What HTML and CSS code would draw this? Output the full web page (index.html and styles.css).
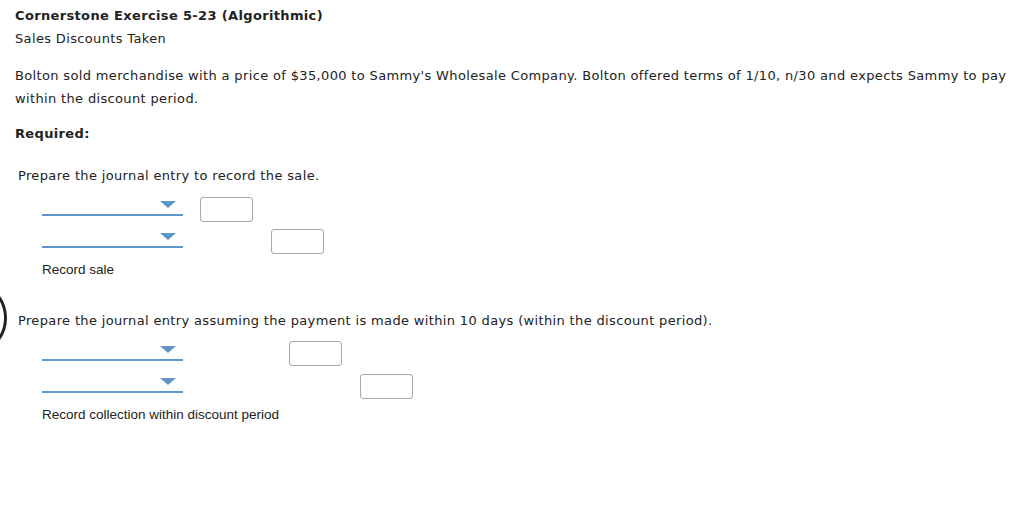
FILE: index.html
```html
<!DOCTYPE html>
<html>
<head>
<meta charset="utf-8">
<link rel="stylesheet" href="styles.css">
</head>
<body>
<div class="page">
  <h1 class="title">Cornerstone Exercise 5-23 (Algorithmic)</h1>
  <p class="subtitle">Sales Discounts Taken</p>
  <p class="intro">Bolton sold merchandise with a price of $35,000 to Sammy's Wholesale Company. Bolton offered terms of 1/10, n/30 and expects Sammy to pay within the discount period.</p>
  <p class="required">Required:</p>

  <section class="part">
    <p class="prompt">Prepare the journal entry to record the sale.</p>
    <div class="entry entry-a">
      <div class="row">
        <div class="select"><span class="caret"></span></div>
        <div class="amount debit"></div>
      </div>
      <div class="row">
        <div class="select"><span class="caret"></span></div>
        <div class="amount credit"></div>
      </div>
      <p class="memo">Record sale</p>
    </div>
  </section>

  <section class="part part-b">
    <span class="marker"></span>
    <p class="prompt">Prepare the journal entry assuming the payment is made within 10 days (within the discount period).</p>
    <div class="entry entry-b">
      <div class="row">
        <div class="select"><span class="caret"></span></div>
        <div class="amount debit"></div>
      </div>
      <div class="row">
        <div class="select"><span class="caret"></span></div>
        <div class="amount credit"></div>
      </div>
      <p class="memo">Record collection within discount period</p>
    </div>
  </section>
</div>
</body>
</html>
```

FILE: styles.css
```css
html, body {
  margin: 0;
  padding: 0;
  background: #ffffff;
}

.page {
  font-family: "DejaVu Sans", Verdana, sans-serif;
  font-size: 13px;
  letter-spacing: 0.35px;
  color: #222222;
  padding: 6px 15px 0 15px;
}

.title {
  margin: 0;
  font-size: 13px;
  font-weight: bold;
  line-height: 20px;
}

.subtitle {
  margin: 3px 0 0 0;
  line-height: 20px;
}

.intro {
  margin: 15px 0 0 0;
  line-height: 23px;
  max-width: 1000px;
}

.required {
  margin: 14px 0 0 0;
  font-weight: bold;
  line-height: 20px;
}

.part {
  position: relative;
  padding-left: 3px;
}

.prompt {
  margin: 22px 0 0 0;
  line-height: 20px;
}

.part-b .prompt {
  margin-top: 31px;
}

.entry {
  padding-left: 24px;
  margin-top: 10px;
}

.row {
  display: flex;
  align-items: flex-start;
  height: 32px;
}

.select {
  position: relative;
  width: 141px;
  height: 18px;
  border-bottom: 2px solid #5f96cc;
}

.caret {
  position: absolute;
  right: 7px;
  top: 5px;
  width: 0;
  height: 0;
  border-left: 8px solid transparent;
  border-right: 8px solid transparent;
  border-top: 7px solid #5f96cc;
}

.amount {
  width: 51px;
  height: 23px;
  border: 1px solid #a9a9a9;
  border-radius: 3px;
  box-shadow: inset 0 0 1px rgba(0,0,0,0.15);
  background: #ffffff;
  margin-top: 1px;
}

.entry-a .debit { margin-left: 17px; }
.entry-a .credit { margin-left: 88px; }
.entry-b .debit { margin-left: 106px; margin-top: 0; }
.entry-b .credit { margin-left: 177px; }

.memo {
  margin: 0;
  font-family: "Liberation Sans", Arial, sans-serif;
  font-size: 13.5px;
  letter-spacing: 0;
  line-height: 20px;
  color: #222222;
}

.marker {
  position: absolute;
  left: -84px;
  top: -31px;
  width: 70px;
  height: 70px;
  border: 3px solid #222222;
  border-radius: 50%;
}
```
